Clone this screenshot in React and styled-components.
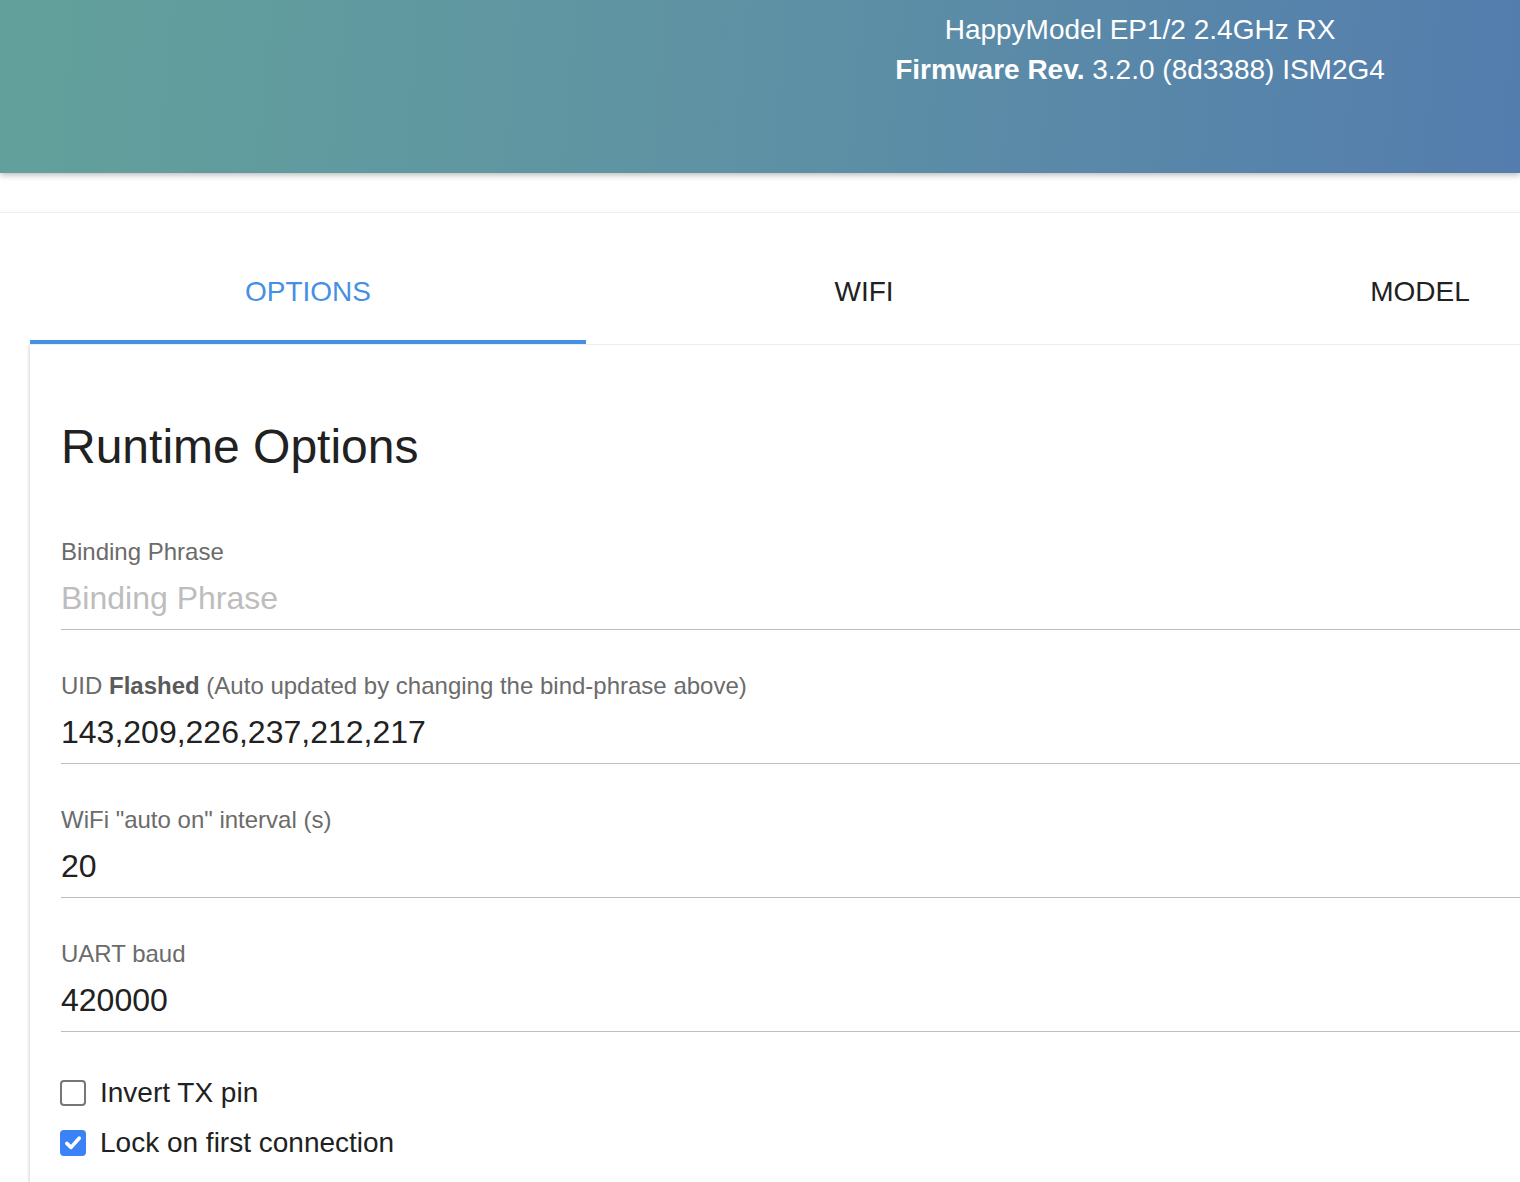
import React, { useState } from "react";
import styled, { createGlobalStyle } from "styled-components";

const GlobalStyle = createGlobalStyle`
  html, body {
    margin: 0;
    padding: 0;
    background: #fff;
    overflow-x: hidden;
  }
  body {
    font-family: "Liberation Sans", Arial, Helvetica, sans-serif;
    color: #212121;
  }
  * {
    box-sizing: border-box;
  }
`;

const Page = styled.div`
  min-height: 1182px;
`;

const Header = styled.header`
  height: 173px;
  display: grid;
  grid-template-columns: 1fr 1fr;
  background: linear-gradient(95deg, #62a19b 0%, #5f93a3 45%, #537dae 100%);
  box-shadow: 0 2px 6px rgba(0, 0, 0, 0.28);
  position: relative;
  z-index: 2;
`;

const DeviceInfo = styled.div`
  grid-column: 2;
  padding-top: 10px;
  text-align: center;
  color: #fff;
  font-size: 28px;
  line-height: 40px;
`;

const Main = styled.main`
  margin-top: 39px;
  overflow: hidden;
  border-top: 1px solid #ededed;
  box-shadow: 0 -1px 2px rgba(0, 0, 0, 0.03);
`;

const TabBar = styled.nav`
  display: flex;
  padding-left: 30px;
`;

const Tab = styled.button`
  flex: 0 0 556px;
  height: 131px;
  padding: 65px 0 0;
  margin: 0;
  border: none;
  border-bottom: 4px solid ${(p) => (p.$active ? "#4590e4" : "transparent")};
  background: #fff;
  font-family: inherit;
  font-size: 28px;
  line-height: 28px;
  text-transform: uppercase;
  color: ${(p) => (p.$active ? "#4590e4" : "#212121")};
  cursor: pointer;
  display: flex;
  justify-content: center;
`;

const Panel = styled.section`
  margin-left: 30px;
  border-top: 1px solid #ececec;
  box-shadow: -1px 0 3px rgba(0, 0, 0, 0.16);
  padding: 73px 0 40px 31px;
  min-height: 840px;
`;

const Title = styled.h1`
  margin: 0 0 20px;
  font-size: 48px;
  line-height: 57.6px;
  font-weight: 400;
  color: #212121;
`;

const Field = styled.div`
  padding-top: 43px;
`;

const Label = styled.label`
  display: block;
  font-size: 24px;
  line-height: 26px;
  color: #6b6b6b;

  b {
    color: #5a5a5a;
  }
`;

const Input = styled.input`
  display: block;
  width: 100%;
  height: 65px;
  padding: 4px 0 0;
  margin: 0;
  border: none;
  border-bottom: 1px solid #bdbdbd;
  outline: none;
  background: transparent;
  font-family: inherit;
  font-size: 32px;
  color: #212121;

  &::placeholder {
    color: #bdbdbd;
  }
`;

const Checks = styled.div`
  padding-top: 36px;
`;

const CheckRow = styled.label`
  display: flex;
  align-items: center;
  height: 50px;
  font-size: 28px;
  color: #212121;
  cursor: pointer;
`;

const Box = styled.span`
  width: 26px;
  height: 26px;
  margin-left: -1px;
  margin-right: 14px;
  border-radius: 4px;
  border: ${(p) => (p.$checked ? "none" : "2px solid #767676")};
  background: ${(p) => (p.$checked ? "#3b82f6" : "#fff")};
  display: flex;
  align-items: center;
  justify-content: center;
  flex-shrink: 0;
`;

const Check = ({ label, defaultChecked }) => {
  const [on, setOn] = useState(defaultChecked);
  return (
    <CheckRow onClick={() => setOn(!on)}>
      <Box $checked={on}>
        {on && (
          <svg width="20" height="20" viewBox="0 0 20 20">
            <path
              d="M3.8 10.4 L8 14.4 L16.2 5.2"
              fill="none"
              stroke="#fff"
              strokeWidth="3.6"
              strokeLinecap="round"
              strokeLinejoin="round"
            />
          </svg>
        )}
      </Box>
      {label}
    </CheckRow>
  );
};

const tabs = ["Options", "WiFi", "Model"];

export default function App() {
  const [active, setActive] = useState(0);

  return (
    <Page>
      <GlobalStyle />
      <Header>
        <DeviceInfo>
          <div>HappyModel EP1/2 2.4GHz RX</div>
          <div>
            <b>Firmware Rev.</b> 3.2.0 (8d3388) ISM2G4
          </div>
        </DeviceInfo>
      </Header>

      <Main>
        <TabBar>
          {tabs.map((t, i) => (
            <Tab key={t} $active={active === i} onClick={() => setActive(i)}>
              {t === "WiFi" ? "WIFI" : t}
            </Tab>
          ))}
        </TabBar>

        <Panel>
          <Title>Runtime Options</Title>

          <Field>
            <Label>Binding Phrase</Label>
            <Input placeholder="Binding Phrase" />
          </Field>

          <Field>
            <Label>
              UID <b>Flashed</b> (Auto updated by changing the bind-phrase above)
            </Label>
            <Input defaultValue="143,209,226,237,212,217" />
          </Field>

          <Field>
            <Label>WiFi "auto on" interval (s)</Label>
            <Input defaultValue="20" />
          </Field>

          <Field>
            <Label>UART baud</Label>
            <Input defaultValue="420000" />
          </Field>

          <Checks>
            <Check label="Invert TX pin" defaultChecked={false} />
            <Check label="Lock on first connection" defaultChecked />
          </Checks>
        </Panel>
      </Main>
    </Page>
  );
}
